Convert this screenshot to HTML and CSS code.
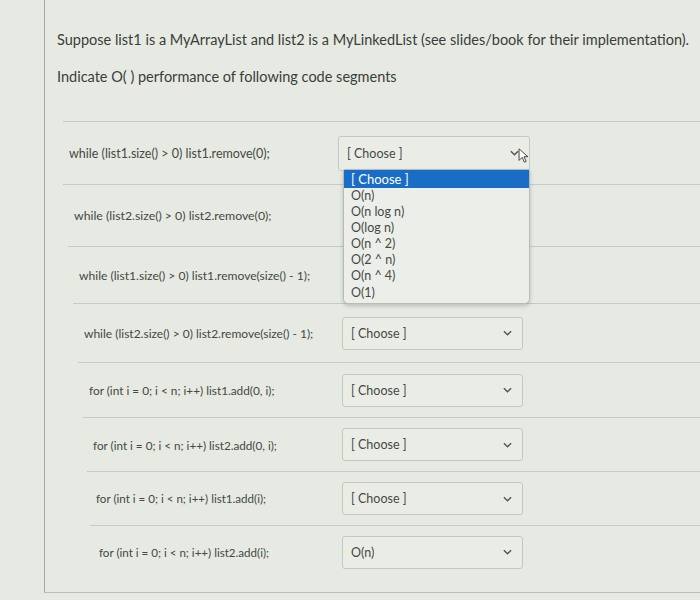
FILE: index.html
```html
<!DOCTYPE html>
<html>
<head>
<meta charset="utf-8">
<link rel="stylesheet" href="styles.css">
</head>
<body>
<div class="page">
  <div class="panel">
    <p class="q">Suppose list1 is a MyArrayList and list2 is a MyLinkedList (see slides/book for their implementation).</p>
    <p class="q q2">Indicate O( ) performance of following code segments</p>
    <div class="table">
      <div class="row">
        <div class="label">while (list1.size() &gt; 0) list1.remove(0);</div>
        <div class="sel-wrap">
          <div class="select open"><span>[ Choose ]</span><svg class="chev" viewBox="0 0 10 6" width="9" height="6"><path d="M1 1 L5 5 L9 1" fill="none" stroke="#555" stroke-width="1.6"/></svg></div>
          <svg class="cursor" viewBox="0 0 12 18" width="11" height="16"><path d="M1 1 L1 14 L4.5 10.5 L7 16 L9 15 L6.5 9.8 L11 9.8 Z" fill="#fff" stroke="#333" stroke-width="1"/></svg>
          <ul class="menu">
            <li class="hl">[ Choose ]</li>
            <li>O(n)</li>
            <li>O(n log n)</li>
            <li>O(log n)</li>
            <li>O(n ^ 2)</li>
            <li>O(2 ^ n)</li>
            <li>O(n ^ 4)</li>
            <li>O(1)</li>
          </ul>
        </div>
      </div>
      <div class="row">
        <div class="label">while (list2.size() &gt; 0) list2.remove(0);</div>
        <div class="sel-wrap"></div>
      </div>
      <div class="row">
        <div class="label">while (list1.size() &gt; 0) list1.remove(size() - 1);</div>
        <div class="sel-wrap"></div>
      </div>
      <div class="row">
        <div class="label">while (list2.size() &gt; 0) list2.remove(size() - 1);</div>
        <div class="sel-wrap"><div class="select"><span>[ Choose ]</span><svg class="chev" viewBox="0 0 10 6" width="9" height="6"><path d="M1 1 L5 5 L9 1" fill="none" stroke="#555" stroke-width="1.6"/></svg></div></div>
      </div>
      <div class="row">
        <div class="label">for (int i = 0; i &lt; n; i++) list1.add(0, i);</div>
        <div class="sel-wrap"><div class="select"><span>[ Choose ]</span><svg class="chev" viewBox="0 0 10 6" width="9" height="6"><path d="M1 1 L5 5 L9 1" fill="none" stroke="#555" stroke-width="1.6"/></svg></div></div>
      </div>
      <div class="row">
        <div class="label">for (int i = 0; i &lt; n; i++) list2.add(0, i);</div>
        <div class="sel-wrap"><div class="select"><span>[ Choose ]</span><svg class="chev" viewBox="0 0 10 6" width="9" height="6"><path d="M1 1 L5 5 L9 1" fill="none" stroke="#555" stroke-width="1.6"/></svg></div></div>
      </div>
      <div class="row">
        <div class="label">for (int i = 0; i &lt; n; i++) list1.add(i);</div>
        <div class="sel-wrap"><div class="select"><span>[ Choose ]</span><svg class="chev" viewBox="0 0 10 6" width="9" height="6"><path d="M1 1 L5 5 L9 1" fill="none" stroke="#555" stroke-width="1.6"/></svg></div></div>
      </div>
      <div class="row last">
        <div class="label">for (int i = 0; i &lt; n; i++) list2.add(i);</div>
        <div class="sel-wrap"><div class="select"><span>O(n)</span><svg class="chev" viewBox="0 0 10 6" width="9" height="6"><path d="M1 1 L5 5 L9 1" fill="none" stroke="#555" stroke-width="1.6"/></svg></div></div>
      </div>
    </div>
  </div>
</div>
</body>
</html>
```
FILE: styles.css
```css
html, body {
  margin: 0;
  padding: 0;
}
body {
  background: #e6eae2;
  font-family: Lato, "Open Sans", sans-serif;
  color: #3d423d;
  width: 700px;
  height: 600px;
  overflow: hidden;
}
.page {
  padding-left: 44px;
}
.panel {
  border-left: 1px solid #a4aaa3;
  border-bottom: 1px solid #b9bfb8;
  padding: 30px 0 0 12px;
  height: 593px;
  box-sizing: border-box;
}
.q {
  margin: 0;
  font-size: 14.5px;
  line-height: 20px;
  color: #393e39;
  white-space: nowrap;
}
.q2 {
  margin-top: 17px;
}
.table {
  margin-top: 34px;
  margin-left: 6px;
  border-top: 1px solid #c6cbc3;
}
.row {
  display: flex;
  align-items: center;
  height: 55px;
  border-bottom: 1px solid #c6cbc3;
  --shift: 0px;
  --fs: 12.5px;
  margin-left: var(--shift);
}
.row:nth-child(1) { height: 62px; --shift: 0px; --fs: 12.5px; }
.row:nth-child(2) { height: 61px; --shift: 5px; --fs: 12.3px; }
.row:nth-child(3) { height: 56px; --shift: 10px; --fs: 12.1px; }
.row:nth-child(4) { height: 58px; --shift: 15px; --fs: 12px; }
.row:nth-child(5) { height: 54px; --shift: 20px; --fs: 11.8px; }
.row:nth-child(6) { height: 53px; --shift: 24px; --fs: 11.7px; }
.row:nth-child(7) { height: 53px; --shift: 27px; --fs: 11.6px; }
.row:nth-child(8) { height: 52px; --shift: 30px; --fs: 11.6px; }
.row.last {
  border-bottom: none;
}
.label {
  width: calc(279px - var(--shift));
  padding-left: 6px;
  font-size: var(--fs);
  color: #434943;
  box-sizing: border-box;
  white-space: nowrap;
}
.sel-wrap {
  position: relative;
  width: 181px;
}
.select {
  height: 31px;
  border: 1px solid #c3c8c0;
  border-radius: 3px;
  background: #eaede6;
  display: flex;
  align-items: center;
  justify-content: space-between;
  padding: 0 10px 0 8px;
  font-size: 12.5px;
  color: #454a45;
}
.select.open {
  height: 33px;
  margin-right: -7px;
  margin-left: -4px;
}
.chev {
  display: block;
}
.cursor {
  position: absolute;
  left: 176px;
  top: 12px;
  z-index: 3;
}
.menu {
  position: absolute;
  left: 1px;
  top: 33px;
  width: 185px;
  margin: 0;
  padding: 0 0 2px 0;
  list-style: none;
  background: #ecefe9;
  border: 1px solid #b7bcb5;
  border-radius: 2px 2px 5px 5px;
  box-shadow: 0 2px 4px rgba(0, 0, 0, 0.18);
  font-size: 12.5px;
  color: #454a45;
  z-index: 2;
}
.menu li {
  height: 16.2px;
  line-height: 16px;
  padding-left: 7px;
}
.menu li.hl {
  background: #1a6dc6;
  color: #ffffff;
  font-size: 13px;
  height: 18px;
  line-height: 18px;
}
```
